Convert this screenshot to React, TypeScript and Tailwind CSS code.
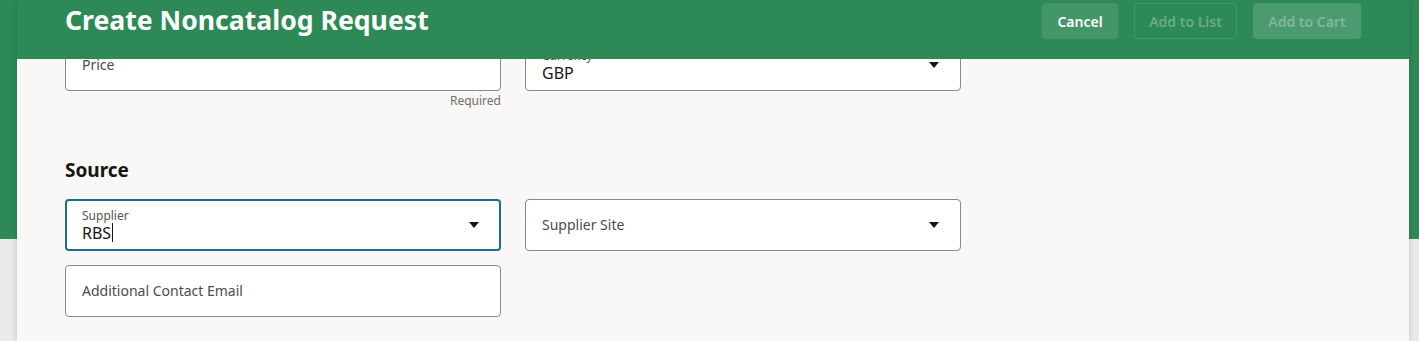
import React from "react";

const font = { fontFamily: '"Noto Sans", "Open Sans", Arial, sans-serif' };

function Caret() {
  return (
    <svg width="10" height="6" viewBox="0 0 10 6" className="shrink-0">
      <polygon points="0,0 10,0 5,6" fill="#161513" />
    </svg>
  );
}

function Field({
  label,
  value,
  select,
  focused,
  cursor,
}: {
  label: string;
  value?: string;
  select?: boolean;
  focused?: boolean;
  cursor?: boolean;
}) {
  return (
    <div
      className={
        "h-[52px] w-[436px] rounded-[4px] bg-white flex items-center justify-between " +
        (focused ? "border-2 border-[#1a6f8e] pl-[15px] pr-[20px]" : "border border-[#8c8a87] pl-[16px] pr-[21px]")
      }
    >
      {value ? (
        <div className="flex flex-col pt-px">
          <span className="text-[12px] leading-[14px] text-[#57534e]">{label}</span>
          <span className="text-[16px] leading-[20px] text-[#161513] flex items-center">
            {value}
            {cursor && <span className="inline-block w-px h-[19px] bg-[#161513] ml-px" />}
          </span>
        </div>
      ) : (
        <span className="text-[14px] leading-[20px] text-[#4f4b46] -mt-px">{label}</span>
      )}
      {select && <Caret />}
    </div>
  );
}

export default function App() {
  return (
    <div
      className="h-[341px] w-full overflow-hidden bg-[linear-gradient(to_bottom,#2d8a57_239px,#ebeae8_239px)]"
      style={font}
    >
      <div className="relative ml-[17px] w-[1392px] h-[341px] bg-[#f9f8f6] shadow-[0_0_6px_rgba(0,0,0,0.18)] overflow-hidden">
        <div className="px-[48px] pt-[39px]">
          <div className="flex gap-6">
            <div className="flex flex-col">
              <Field label="Price" />
              <div className="text-right text-[12px] leading-[20px] text-[#6f6c69]">Required</div>
            </div>
            <Field label="Currency" value="GBP" select />
          </div>

          <h2 className="mt-[45px] text-[19px] leading-[28px] font-bold text-[#161513]">Source</h2>

          <div className="mt-[15px] grid grid-cols-[436px_436px] gap-x-6 gap-y-[14px]">
            <Field label="Supplier" value="RBS" select focused cursor />
            <Field label="Supplier Site" select />
            <Field label="Additional Contact Email" />
          </div>
        </div>

        <header className="absolute top-0 inset-x-0 h-[59px] bg-[#2d8a57] px-[48px]">
          <div className="h-[42px] flex items-center justify-between">
            <h1 className="text-[26.6px] font-bold text-white">Create Noncatalog Request</h1>
            <div className="flex items-center gap-4">
              <button className="h-9 w-[76px] rounded-[4px] bg-white/10 text-[14px] font-semibold text-white">
                Cancel
              </button>
              <button className="h-9 w-[103px] rounded-[4px] border border-white/10 text-[14px] font-semibold text-white/30">
                Add to List
              </button>
              <button className="h-9 w-[108px] rounded-[4px] bg-white/15 text-[14px] font-semibold text-white/30">
                Add to Cart
              </button>
            </div>
          </div>
        </header>
      </div>
    </div>
  );
}
